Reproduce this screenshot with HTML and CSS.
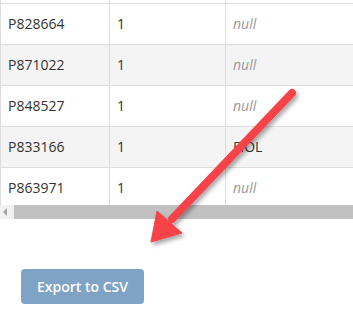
FILE: index.html
```html
<!doctype html>
<html lang="en">
<head>
  <meta charset="UTF-8">
  <title>Export</title>
  <link rel="stylesheet" href="styles.css">
</head>
<body>
  <div class="page">
    <div class="grid-wrap">
      <div class="grid-view">
        <table class="grid">
          <tr class="head"><td></td><td></td><td></td><td></td></tr>
          <tr><td>P828664</td><td>1</td><td class="null">null</td><td></td></tr>
          <tr><td>P871022</td><td>1</td><td class="null">null</td><td></td></tr>
          <tr><td>P848527</td><td>1</td><td class="null">null</td><td></td></tr>
          <tr><td>P833166</td><td>1</td><td>FIOL</td><td></td></tr>
          <tr><td>P863971</td><td>1</td><td class="null">null</td><td></td></tr>
        </table>
      </div>
      <div class="hscroll">
        <span class="hscroll-left"></span>
        <span class="hscroll-thumb"></span>
      </div>
    </div>
    <button class="btn-export">Export to CSV</button>

    <!-- annotation arrow -->
    <svg class="callout" width="353" height="311" viewBox="0 0 353 311">
      <defs>
        <filter id="sh" x="-20%" y="-20%" width="140%" height="140%">
          <feDropShadow dx="2" dy="3" stdDeviation="2" flood-color="#000" flood-opacity="0.35"/>
        </filter>
      </defs>
      <g filter="url(#sh)" fill="#f6434a" stroke="#f6434a">
        <line x1="292" y1="93" x2="172" y2="219" stroke-width="8" stroke-linecap="round"/>
        <polygon points="157,211 182,233 151,242" stroke-width="1" stroke-linejoin="round"/>
      </g>
    </svg>
  </div>
</body>
</html>
```

FILE: styles.css
```css
*{margin:0;
  padding:0;
  box-sizing:border-box;}
html,body{overflow:hidden;
          background:#fff;}
body{font-family:"Open Sans","Liberation Sans",sans-serif;
     font-size:14px;
     color:#333;}
.page{position:relative;
      display:flow-root;
      width:353px;}
.grid-wrap{width:520px;
           margin-top:-38px;}
.grid-view{height:243px;
           overflow:hidden;}
.grid{border-collapse:collapse;
      width:600px;
      table-layout:fixed;}
.grid td{height:41px;
         padding:0 7px;
         border:1px solid #ddd;
         border-top:0;
         vertical-align:middle;
         white-space:nowrap;}
.grid td:nth-child(1){width:109px;}
.grid td:nth-child(2){width:116px;}
.grid td:nth-child(3){width:128px;}
.grid tr:nth-child(odd){background:#f4f4f4;}
.grid tr.head{background:#fff;}
.grid td.null{color:#999;
              font-style:italic;}
.hscroll{display:flex;
         align-items:center;
         height:14px;
         background:#f1f1f1;}
.hscroll-left{width:14px;
              display:flex;
              justify-content:center;}
.hscroll-left::before{content:"";
                      border-right:4px solid #a3a3a3;
                      border-top:4px solid transparent;
                      border-bottom:4px solid transparent;
                      margin-right:4px;}
.hscroll-thumb{flex:1;
               height:14px;
               background:#c1c1c1;}
.btn-export{display:block;
            margin:50px 0 0 21px;
            padding:8px 16px;
            line-height:19px;
            font-family:"Open Sans","Liberation Sans",sans-serif;
            font-size:14px;
            font-weight:600;
            color:#fff;
            background:#7fa3c5;
            border:0;
            border-radius:4px;}
.callout{position:absolute;
         left:0;
         top:0;
         pointer-events:none;}
```
